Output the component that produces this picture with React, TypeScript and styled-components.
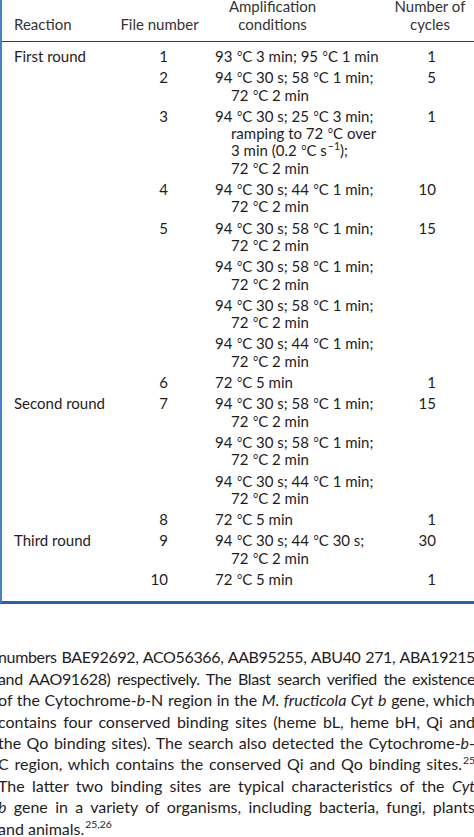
import React from "react";
import styled, { createGlobalStyle } from "styled-components";

type Row = {
  reaction?: string;
  file?: string;
  cond: string[][];
  cycles?: string;
};

const A = "94 °C 30 s; 58 °C 1 min;";
const B = "72 °C 2 min";
const C = "94 °C 30 s; 44 °C 1 min;";
const F = "72 °C 5 min";

const rows: Row[] = [
  { reaction: "First round", file: "1", cond: [["93 °C 3 min; 95 °C 1 min"]], cycles: "1" },
  { file: "2", cond: [[A, B]], cycles: "5" },
  {
    file: "3",
    cond: [["94 °C 30 s; 25 °C 3 min;", "ramping to 72 °C over", "3 min (0.2 °C s^-1);", B]],
    cycles: "1",
  },
  { file: "4", cond: [[C, B]], cycles: "10" },
  { file: "5", cond: [[A, B], [A, B], [A, B], [C, B]], cycles: "15" },
  { file: "6", cond: [[F]], cycles: "1" },
  { reaction: "Second round", file: "7", cond: [[A, B], [A, B], [C, B]], cycles: "15" },
  { file: "8", cond: [[F]], cycles: "1" },
  { reaction: "Third round", file: "9", cond: [["94 °C 30 s; 44 °C 30 s;", B]], cycles: "30" },
  { file: "10", cond: [[F]], cycles: "1" },
];

// "°" gets its own raised glyph, "s^-1" becomes a superscript
function renderCond(text: string) {
  const parts = text.split(/( °|\^-1)/);
  return parts.map((p, i) => {
    if (p === " °") return <Deg key={i}>°</Deg>;
    if (p === "^-1") return <Sup key={i}>−1</Sup>;
    return <React.Fragment key={i}>{p}</React.Fragment>;
  });
}

export default function App() {
  return (
    <>
      <GlobalStyle />
      <Page>
        <TableBox>
          <Header>
            <HeadCell>
              <br />
              Reaction
            </HeadCell>
            <HeadCell $align="center">
              <br />
              File number
            </HeadCell>
            <HeadCell $align="center" $padR={16}>
              Amplification
              <br />
              conditions
            </HeadCell>
            <HeadCell $align="center" $padL={26}>
              Number of
              <br />
              cycles
            </HeadCell>
          </Header>

          <Body>
            {rows.map((r, idx) =>
              r.cond.map((lines, j) => (
                <RowGrid key={`${idx}-${j}`}>
                  <LabelCell>{j === 0 ? r.reaction : ""}</LabelCell>
                  <NumCell $padR={33}>{j === 0 ? r.file : ""}</NumCell>
                  <CondCell>
                    {lines.map((l, k) => (
                      <CondLine key={k} $indent={k > 0}>
                        {renderCond(l)}
                      </CondLine>
                    ))}
                  </CondCell>
                  <NumCell $padR={38}>{j === 0 ? r.cycles : ""}</NumCell>
                </RowGrid>
              ))
            )}
          </Body>
        </TableBox>

        <Para>
          <Line $tight>numbers BAE92692, ACO56366, AAB95255, ABU40 271, ABA19215</Line>
          <Line $tight>and AAO91628) respectively. The Blast search verified the existence</Line>
          <Line>
            of the Cytochrome-<i>b</i>-N region in the <i>M. fructicola Cyt b</i> gene, which
          </Line>
          <Line>contains four conserved binding sites (heme bL, heme bH, Qi and</Line>
          <Line>
            the Qo binding sites). The search also detected the Cytochrome-<i>b</i>-
          </Line>
          <Line>
            C region, which contains the conserved Qi and Qo binding sites.<PSup>25</PSup>
          </Line>
          <Line>
            The latter two binding sites are typical characteristics of the <i>Cyt</i>
          </Line>
          <Line>
            <i>b</i> gene in a variety of organisms, including bacteria, fungi, plants
          </Line>
          <LastLine>
            and animals.<PSup>25,26</PSup>
          </LastLine>
        </Para>
      </Page>
    </>
  );
}

/* ===== styled components ===== */

const GlobalStyle = createGlobalStyle`
  html, body {
    margin: 0;
    padding: 0;
    background: #fff;
    overflow: hidden;
  }
  body {
    font-family: Lato, "Open Sans", sans-serif;
    color: #1f1c1d;
  }
`;

const Page = styled.div`
  width: 474px;
  height: 837px;
  overflow: hidden;
`;

const TableBox = styled.div`
  border-left: 2px solid #4382c6;
  border-bottom: 3px solid #2b63aa;
  font-size: 15px;
  padding-bottom: 11px;
`;

const cols = `116px 83px 159px 1fr`;

const Header = styled.div`
  display: grid;
  grid-template-columns: ${cols};
  margin-top: -3px;
  padding-bottom: 8px;
  border-bottom: 1px solid #3a3a3a;
  line-height: 18px;
  color: #333;
`;

const HeadCell = styled.div<{ $align?: string; $padL?: number; $padR?: number }>`
  text-align: ${(p) => p.$align ?? "left"};
  padding-left: ${(p) => p.$padL ?? 0}px;
  padding-right: ${(p) => p.$padR ?? 0}px;
  &:first-child {
    padding-left: 12px;
  }
  white-space: nowrap;
`;

const Body = styled.div`
  padding-top: 4px;
`;

const RowGrid = styled.div`
  display: grid;
  grid-template-columns: ${cols};
  padding: 2px 0;
  line-height: 17.3px;
`;

const LabelCell = styled.div`
  padding-left: 12px;
  white-space: nowrap;
`;

const NumCell = styled.div<{ $padR: number }>`
  text-align: right;
  padding-right: ${(p) => p.$padR}px;
`;

const CondCell = styled.div`
  padding-left: 14px;
  white-space: nowrap;
`;

const CondLine = styled.div<{ $indent?: boolean }>`
  height: 17.3px;
  padding-left: ${(p) => (p.$indent ? 16 : 0)}px;
`;

const Deg = styled.span`
  position: relative;
  top: -1px;
  margin: 0 0 0 4.5px;
  font-size: 0.85em;
  line-height: 0;
`;

const Sup = styled.sup`
  font-size: 0.7em;
  line-height: 0;
  margin-left: 1px;
`;

const Para = styled.div`
  margin: 42px 0 0 -2px;
  width: 477px;
  font-size: 16px;
  line-height: 21.4px;
`;

const Line = styled.div<{ $tight?: boolean }>`
  white-space: nowrap;
  text-align: justify;
  text-align-last: justify;
  letter-spacing: ${(p) => (p.$tight ? "-0.35px" : "0")};
  word-spacing: ${(p) => (p.$tight ? "-1px" : "0")};
`;

const LastLine = styled.div`
  white-space: nowrap;
`;

const PSup = styled.sup`
  font-size: 0.65em;
  line-height: 0;
  margin-left: 1px;
`;
